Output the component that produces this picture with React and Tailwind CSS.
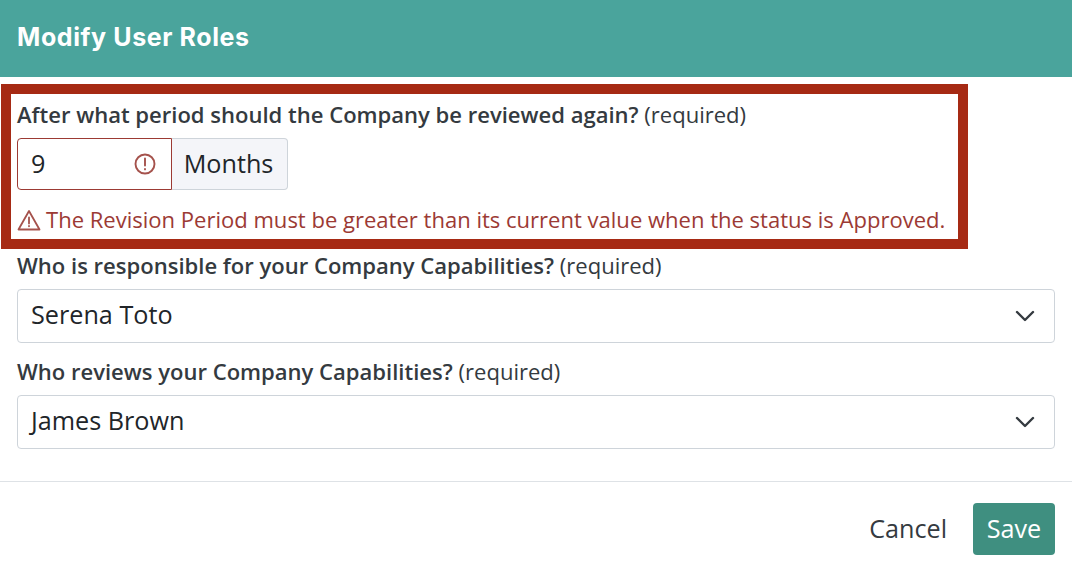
import React from "react";

function Chevron() {
  return (
    <svg width="20" height="12" viewBox="0 0 20 12" fill="none" stroke="#343a40" strokeWidth="2.4" strokeLinecap="round" strokeLinejoin="round">
      <path d="M2 2l8 8 8-8" />
    </svg>
  );
}

function Label({ children }) {
  return (
    <div className="h-[30px] whitespace-nowrap text-[22.04px] leading-[28px] text-[#343a40]">
      <span className="font-semibold">{children}</span> <span>(required)</span>
    </div>
  );
}

function Select({ value }) {
  return (
    <div className="mt-[8px] flex h-[54px] items-center justify-between rounded-[4px] border border-[#ced4da] bg-white pl-[13px] pr-[19px] text-[25.2px] text-[#212529]">
      <span className="pb-[2px]">{value}</span>
      <Chevron />
    </div>
  );
}

export default function App() {
  return (
    <div className="flex h-[572px] w-[1072px] flex-col overflow-hidden bg-white font-['Open_Sans',sans-serif]">
      <div className="flex h-[77px] items-center bg-[#4aa49c] px-[17px] pb-[1px] font-['Inter',sans-serif] text-[25px] font-bold tracking-[0.6px] text-white">Modify User Roles</div>
      <div className="flex flex-1 flex-col px-[17px]">
        <div className="-ml-[16px] mt-[7px] w-[967px] border-[10px] border-[#a62a14] pl-[6px] pt-[6px] pb-[4px]">
          <Label>After what period should the Company be reviewed again?</Label>
          <div className="mt-[8px] flex h-[52px]">
            <div className="flex w-[155px] items-center justify-between rounded-l-[4px] border border-[#9c3a34] pl-[13px] pr-[14px] text-[25.2px] text-[#212529]">
              <span>9</span>
              <svg width="24" height="24" viewBox="0 0 24 24" fill="none" stroke="#a5524c" strokeWidth="1.9" strokeLinecap="round">
                <circle cx="12" cy="12" r="9.5" />
                <path d="M12 6.5v7M12 17v.4" />
              </svg>
            </div>
            <div className="flex w-[116px] items-center justify-center rounded-r-[4px] border border-l-0 border-[#ced4da] bg-[#f4f5f9] pr-[2px] text-[25.2px] text-[#212529]">Months</div>
          </div>
          <div className="mt-[15px] flex h-[30px] items-center gap-[5px] whitespace-nowrap text-[22.04px] leading-[30px] text-[#9c3a34]">
            <svg width="24" height="24" viewBox="0 0 24 24" fill="none" stroke="#a5524c" strokeWidth="1.8" strokeLinecap="round" strokeLinejoin="round">
              <path d="M12 3L1.5 21.5h21L12 3z" />
              <path d="M12 9.5v6M12 18v.3" />
            </svg>
            <span className="pb-[2px]">The Revision Period must be greater than its current value when the status is Approved.</span>
          </div>
        </div>
        <div className="mt-[2px]"><Label>Who is responsible for your Company Capabilities?</Label></div>
        <Select value="Serena Toto" />
        <div className="mt-[14px]"><Label>Who reviews your Company Capabilities?</Label></div>
        <Select value="James Brown" />
      </div>
      <div className="flex h-[91px] items-center justify-end gap-[26px] border-t border-[#dee2e6] px-[17px] pt-[4px] text-[25.2px]">
        <span className="text-[#343a40]">Cancel</span>
        <span className="flex h-[52px] w-[82px] items-center justify-center rounded-[4px] bg-[#3f8f80] text-white">Save</span>
      </div>
    </div>
  );
}
